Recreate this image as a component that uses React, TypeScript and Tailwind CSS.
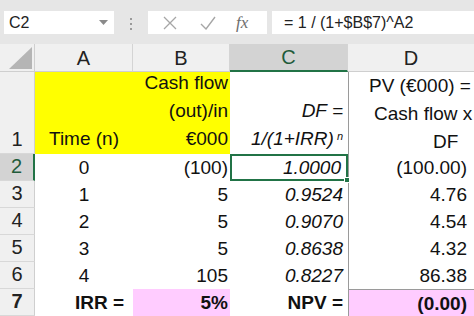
const font = { fontFamily: '"Liberation Sans", Arial, sans-serif' };

function Toolbar() {
  return (
    <div className="flex h-[44px] items-start gap-0 bg-[#e6e6e6] pt-[11px]">
      <div className="ml-[4px] flex h-[23px] w-[110px] items-center justify-between bg-white pl-[5px] pr-[6px]">
        <span className="text-[16px] text-[#222]">C2</span>
        <svg width="9" height="5" viewBox="0 0 9 5">
          <path d="M0 0h9L4.5 5z" fill="#8a8a8a" />
        </svg>
      </div>
      <div className="flex w-[34px] flex-col items-center justify-center gap-[3px] pt-[7px]">
        <span className="block h-[2px] w-[2px] bg-[#9a9a9a]" />
        <span className="block h-[2px] w-[2px] bg-[#9a9a9a]" />
        <span className="block h-[2px] w-[2px] bg-[#9a9a9a]" />
      </div>
      <div className="flex h-[23px] w-[119px] items-center bg-white">
        <svg width="14" height="14" viewBox="0 0 14 14" className="ml-[15px]">
          <path d="M1 1l12 12M13 1L1 13" stroke="#a6a6a6" strokeWidth="1.3" />
        </svg>
        <svg width="16" height="14" viewBox="0 0 16 14" className="ml-[23px]">
          <path d="M1 8l5 5L15 1" stroke="#a6a6a6" strokeWidth="1.4" fill="none" />
        </svg>
        <span
          className="ml-[20px] text-[17px] italic text-[#6d6d6d]"
          style={{ fontFamily: '"Liberation Serif", serif' }}
        >
          fx
        </span>
      </div>
      <div className="ml-[5px] flex h-[23px] flex-1 items-center bg-white pl-[12px]">
        <span className="text-[16px] text-[#222]">= 1 / (1+$B$7)^A2</span>
      </div>
    </div>
  );
}

function ColHead({ label, active, w }: { label: string; active?: boolean; w: string }) {
  return (
    <div
      className={`${w} flex h-[28px] items-center justify-center border-r border-[#d4d4d4] text-[20px] ${
        active ? "border-b-2 border-b-[#217346] bg-[#d3d3d3] text-[#1f5b3a]" : "border-b border-b-[#cfcfcf] bg-[#f0f0f0] text-[#222]"
      }`}
    >
      {label}
    </div>
  );
}

function RowHead({ n, active, h }: { n: number; active?: boolean; h: string }) {
  return (
    <div
      className={`${h} flex w-[35px] items-end justify-center border-b border-[#d8d8d8] text-[20px] ${
        active ? "border-r-2 border-r-[#217346] bg-[#d3d3d3] text-[#1f5b3a]" : "border-r border-r-[#cfcfcf] bg-[#f0f0f0] text-[#222]"
      }`}
    >
      <span className="pb-[2px] leading-[24px]">{n}</span>
    </div>
  );
}

const rows = [
  { n: 0, cf: "(100)", df: "1.0000", pv: "(100.00)" },
  { n: 1, cf: "5", df: "0.9524", pv: "4.76" },
  { n: 2, cf: "5", df: "0.9070", pv: "4.54" },
  { n: 3, cf: "5", df: "0.8638", pv: "4.32" },
  { n: 4, cf: "105", df: "0.8227", pv: "86.38" },
];

export default function App() {
  return (
    <div className="h-[316px] w-[474px] overflow-hidden bg-white text-[#111]" style={font}>
      <Toolbar />
      <div className="flex">
        <div className="flex h-[28px] w-[35px] items-end justify-end border-b border-r border-[#cfcfcf] bg-[#f0f0f0] pb-[2px] pr-[2px]">
          <svg width="23" height="22" viewBox="0 0 23 22">
            <path d="M23 0V22H0z" fill="#b5b5b5" />
          </svg>
        </div>
        <ColHead label="A" w="w-[98px]" />
        <ColHead label="B" w="w-[97px]" />
        <ColHead label="C" w="w-[118px]" active />
        <ColHead label="D" w="flex-1 border-r-0" />
      </div>

      {/* row 1 */}
      <div className="flex text-[19px]">
        <RowHead n={1} h="h-[82px]" />
        <div className="flex h-[82px] w-[98px] items-end justify-center bg-[#ffff00] pb-[1px] leading-[28px]">
          Time (n)
        </div>
        <div className="flex h-[82px] w-[97px] flex-col items-end justify-end bg-[#ffff00] pb-[1px] pr-[2px] leading-[28px]">
          <div>Cash flow</div>
          <div>(out)/in</div>
          <div>€000</div>
        </div>
        <div className="flex h-[82px] w-[118px] flex-col items-end justify-end pb-[1px] pr-[5px] italic leading-[28px]">
          <div>DF =</div>
          <div>
            1/(1+IRR)<sup className="ml-[3px] text-[11px]">n</sup>
          </div>
        </div>
        <div className="flex h-[82px] flex-1 flex-col overflow-hidden whitespace-nowrap border-l border-[#9a9a9a] pb-[1px] leading-[28px]">
          <div className="pl-[20px]">PV (€000) =</div>
          <div className="pl-[25px]">Cash flow x</div>
          <div className="pl-[84px]">DF</div>
        </div>
      </div>

      {rows.map((r, i) => (
        <div key={r.n} className="flex text-[19px] leading-[27px]">
          <RowHead n={i + 2} h="h-[27px]" active={i === 0} />
          <div className="h-[27px] w-[98px] text-center">{r.n}</div>
          <div className="h-[27px] w-[97px] pr-[2px] text-right">{r.cf}</div>
          <div
            className={`relative h-[27px] w-[118px] pr-[5px] text-right italic ${
              i === 0 ? "border-2 border-[#217346] leading-[23px]" : ""
            }`}
          >
            {r.df}
            {i === 0 && (
              <span className="absolute -bottom-[4px] -right-[4px] h-[6px] w-[6px] border border-white bg-[#217346]" />
            )}
          </div>
          <div className="h-[27px] flex-1 border-l border-[#9a9a9a] pr-[7px] text-right">{r.pv}</div>
        </div>
      ))}

      <div className="flex text-[19px] font-bold leading-[27px]">
        <RowHead n={7} h="h-[27px]" />
        <div className="h-[27px] w-[98px] pr-[9px] text-right">IRR =</div>
        <div className="h-[27px] w-[97px] bg-[#ffccff] pr-[2px] text-right">5%</div>
        <div className="h-[27px] w-[118px] pr-[5px] text-right">NPV =</div>
        <div className="h-[27px] flex-1 border-l border-t border-[#9a9a9a] bg-[#ffccff] pr-[7px] text-right">
          (0.00)
        </div>
      </div>
    </div>
  );
}
